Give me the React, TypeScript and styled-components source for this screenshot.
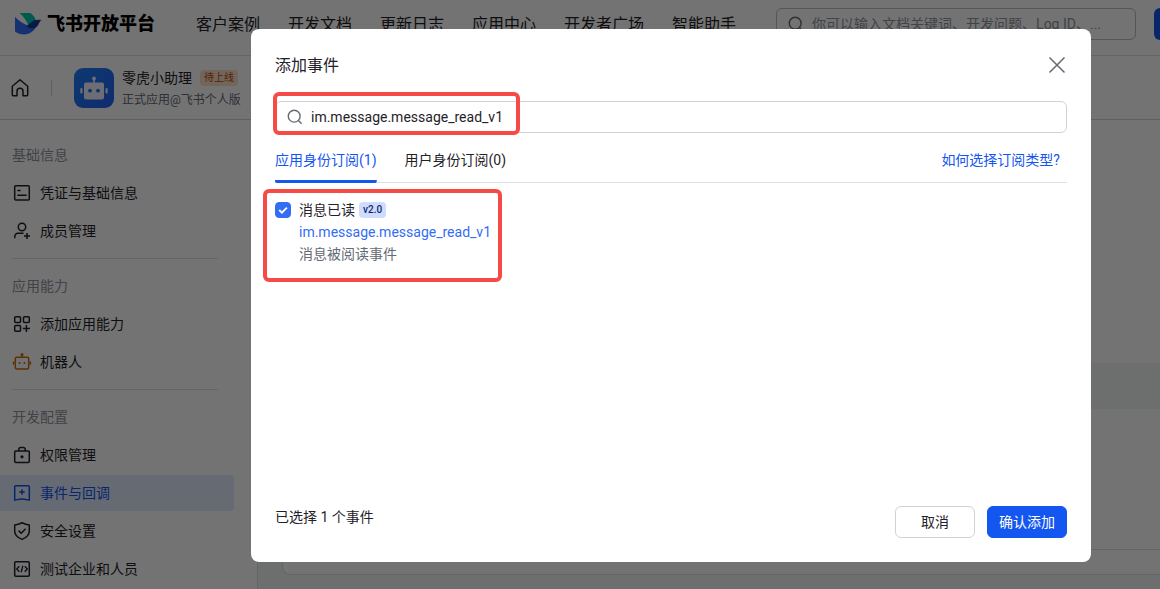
import React, { useState } from 'react';
import styled, { createGlobalStyle } from 'styled-components';

const Global = createGlobalStyle`
  * { box-sizing: border-box; }
  body {
    margin: 0;
    background: #fff;
    color: #1f2329;
    font-family: Roboto, 'Noto Sans CJK SC', sans-serif;
    font-size: 14px;
    line-height: 22px;
  }
  button, input { font: inherit; color: inherit; }
  button { cursor: pointer; }
  a { color: inherit; text-decoration: none; }
`;

/* ---------- page frame ---------- */

const Page = styled.div`
  display: flex;
  flex-direction: column;
  height: 100vh;
  overflow: hidden;
`;

const TopBar = styled.header`
  display: flex;
  flex: none;
  align-items: center;
  height: 56px;
  padding: 0 0 8px 14px;
  border-bottom: 1px solid #dee0e3;
`;

const Brand = styled.a`
  display: flex;
  flex: 0 0 182px;
  align-items: center;
  gap: 5px;
  color: #000;
  font-size: 18px;
  font-weight: 900;
  white-space: nowrap;
`;

const TopNav = styled.nav`
  display: flex;
  flex: none;
  gap: 28px;
  padding-top: 2px;
  font-size: 16px;
  white-space: nowrap;
`;

const SearchField = styled.label`
  display: flex;
  align-items: center;
  gap: 8px;
  height: 32px;
  padding: 0 11px;
  border: 1px solid #d0d3d6;
  border-radius: 6px;
  color: #646a73;
`;

const TopSearch = styled(SearchField)`
  flex: 0 0 360px;
  margin: 0 18px 0 40px;
  border-color: #bbbfc4;
`;

const BareInput = styled.input`
  flex: 1;
  min-width: 0;
  padding: 0;
  border: 0;
  outline: 0;
  background: transparent;
  color: #1f2329;
  &::placeholder { color: #8f959e; opacity: 1; }
`;

const LoginButton = styled.button`
  flex: none;
  width: 80px;
  height: 32px;
  border: 0;
  border-radius: 6px;
  background: #1456f0;
  color: #fff;
`;

const AppBar = styled.div`
  display: flex;
  flex: none;
  align-items: center;
  height: 64px;
  padding-left: 10px;
  border-bottom: 1px solid #d0d3d6;
`;

const HomeLink = styled.a`
  display: flex;
  margin-right: 21px;
`;

const Divider = styled.span`
  width: 1px;
  height: 16px;
  margin-right: 22px;
  background: #d0d3d6;
`;

const AppText = styled.div`
  margin-left: 8px;
  padding-top: 2px;
`;

const AppName = styled.div`
  display: flex;
  align-items: center;
  gap: 8px;
`;

const StatusTag = styled.span`
  padding: 0 4px;
  border-radius: 4px;
  background: #fedfc8;
  color: #b25206;
  font-size: 10px;
  line-height: 16px;
`;

const AppKind = styled.div`
  color: #646a73;
  font-size: 12px;
`;

const Body = styled.div`
  display: flex;
  flex: 1;
  min-height: 0;
`;

/* ---------- side navigation ---------- */

const Sidebar = styled.aside`
  flex: 0 0 258px;
  padding: 17px 23px 0 0;
  overflow: hidden;
  border-right: 1px solid #dee0e3;
`;

const NavGroup = styled.section`
  & + &::before {
    content: '';
    display: block;
    margin: 9px 16px 9px 12px;
    border-top: 1px solid #dee0e3;
  }
`;

const NavHeading = styled.h2`
  display: flex;
  align-items: center;
  height: 36px;
  margin: 0 0 2px;
  padding-left: 12px;
  color: #8f959e;
  font-size: 14px;
  font-weight: 400;
`;

const NavItem = styled.a<{ $active?: boolean }>`
  display: flex;
  align-items: center;
  gap: 8px;
  height: 36px;
  margin-bottom: 2px;
  padding-left: 12px;
  border-radius: 0 4px 4px 0;
  background: ${p => (p.$active ? '#e1eaff' : 'transparent')};
  color: ${p => (p.$active ? '#1456f0' : '#1f2329')};
`;

/* ---------- content behind the dialog ---------- */

const Content = styled.main`
  display: flex;
  flex: 1;
  padding: 0 0 14px 24px;
  background: #f0f5f4;
`;

const Card = styled.section`
  display: flex;
  flex: 1;
  flex-direction: column;
  border: solid #dee0e3;
  border-width: 0 0 1px 1px;
  border-radius: 0 0 0 8px;
  background: #fff;
`;

const CardSpace = styled.div`
  flex: 1;
`;

const TableHead = styled.div`
  height: 46px;
  background: #f0f5f4;
`;

const TableBody = styled.div`
  height: 141px;
  margin-bottom: 24px;
  border-bottom: 1px solid #dee0e3;
`;

/* ---------- dialog ---------- */

const Overlay = styled.div`
  position: fixed;
  inset: 0;
  display: flex;
  padding: 29px 69px 27px 251px;
  background: rgba(0, 0, 0, 0.55);
`;

const Dialog = styled.div`
  display: flex;
  flex: 1;
  flex-direction: column;
  padding: 24px;
  border-radius: 8px;
  background: #fff;
`;

const DialogHead = styled.div`
  display: flex;
  align-items: center;
  justify-content: space-between;
  height: 24px;
  margin-bottom: 24px;
`;

const DialogTitle = styled.h1`
  margin: 0;
  padding-top: 2px;
  font-size: 16px;
  font-weight: 400;
`;

const CloseButton = styled.button`
  display: flex;
  padding: 0;
  border: 0;
  background: none;
  color: #646a73;
`;

const Marked = styled.div`
  position: relative;
`;

const Mark = styled.span`
  position: absolute;
  border: 4px solid #f54a45;
  border-radius: 6px;
  pointer-events: none;
`;

const SearchMark = styled(Mark)`
  top: -9px;
  left: -2px;
  width: 247px;
  height: 43px;
`;

const EventMark = styled(Mark)`
  inset: -10px -11px -17px -12px;
`;

const TabRow = styled.div`
  display: flex;
  gap: 28px;
  height: 50px;
  padding-right: 7px;
  border-bottom: 1px solid #dee0e3;
`;

const Tab = styled.button<{ $active?: boolean }>`
  height: 50px;
  padding: 4px 0 0;
  border: 0;
  border-radius: 2px;
  background: ${p =>
    p.$active ? 'linear-gradient(#1456f0, #1456f0) bottom / 100% 3px no-repeat' : 'none'};
  color: ${p => (p.$active ? '#1456f0' : '#1f2329')};
`;

const HelpLink = styled.a`
  margin: 16px 0 0 auto;
  color: #1456f0;
`;

const EventItem = styled(Marked)`
  display: flex;
  gap: 8px;
  align-self: flex-start;
  margin-top: 16px;
`;

const CheckBox = styled.span`
  display: grid;
  height: 16px;
  margin-top: 3px;
  svg {
    grid-area: 1 / 1;
    pointer-events: none;
  }
`;

const CheckInput = styled.input`
  grid-area: 1 / 1;
  width: 16px;
  height: 16px;
  margin: 0;
  border: 1px solid #8f959e;
  border-radius: 4px;
  appearance: none;
  &:checked {
    border-color: #336df4;
    background: #336df4;
  }
`;

const EventTitle = styled.label`
  display: flex;
  align-items: center;
  gap: 4px;
`;

const VersionTag = styled.span`
  padding: 0 4px;
  border-radius: 4px;
  background: #d0dcff;
  color: #0c296e;
  font-size: 10px;
  font-weight: 500;
  line-height: 16px;
`;

const EventCode = styled.a`
  display: block;
  color: #336df4;
`;

const EventNote = styled.div`
  color: #646a73;
`;

const DialogFoot = styled.div`
  display: flex;
  align-items: center;
  gap: 12px;
  margin-top: auto;
`;

const Picked = styled.span`
  margin: 0 auto 10px 0;
`;

const Button = styled.button<{ $primary?: boolean }>`
  width: 80px;
  height: 32px;
  padding: 0;
  border: 1px solid ${p => (p.$primary ? '#1456f0' : '#d0d3d6')};
  border-radius: 6px;
  background: ${p => (p.$primary ? '#1456f0' : '#fff')};
  color: ${p => (p.$primary ? '#fff' : '#1f2329')};
`;

/* ---------- drawings ---------- */

const Glyph = styled.svg`
  flex: none;
  fill: none;
  stroke: currentColor;
  stroke-width: 1.5;
  stroke-linejoin: round;
`;

const Icon = ({ children }: { children: React.ReactNode }) => (
  <Glyph width="20" height="20" viewBox="0 0 20 20" aria-hidden="true">{children}</Glyph>
);

const SearchIcon = () => (
  <Glyph width="16" height="16" viewBox="0 0 16 16" aria-hidden="true">
    <circle cx="7.2" cy="7.2" r="5.9" strokeWidth="1.4" />
    <path d="M11.4 11.6 14.6 14.8" strokeWidth="1.4" />
  </Glyph>
);

const CredentialIcon = () => (
  <Icon><rect x="2.7" y="2.7" width="14.6" height="14.2" rx="1" /><path d="M5.3 7.4h3.4M5.3 12.2h9.4" /></Icon>
);

const MemberIcon = () => (
  <Icon>
    <circle cx="10" cy="6" r="3.7" />
    <path d="M2.8 17.2v-1.9a3 3 0 0 1 3-3h5.7M15 12v6M12 15h6" />
  </Icon>
);

const AbilityIcon = () => (
  <Icon>
    <rect x="2.7" y="2.7" width="5.8" height="5.8" rx="1" />
    <rect x="11.5" y="2.7" width="5.8" height="5.8" rx="1" />
    <rect x="2.7" y="11.5" width="5.8" height="5.8" rx="1" />
    <path d="M14.4 11v7M10.9 14.5h7" />
  </Icon>
);

const BotIcon = () => (
  <Glyph width="20" height="20" viewBox="0 0 20 20" color="#c7700a" aria-hidden="true">
    <rect x="3.3" y="5.2" width="13.4" height="11.8" rx="1.5" />
    <path d="M10 5V2M1.6 9.4v3.4M18.4 9.4v3.4" />
    <path d="M6.8 11h1.6M11.6 11h1.6" strokeWidth="1.8" />
    <circle cx="10" cy="2.6" r=".8" fill="currentColor" />
  </Glyph>
);

const PermissionIcon = () => (
  <Icon>
    <rect x="2.7" y="6" width="14.6" height="11.4" rx="1" />
    <path d="M6.8 6V4.6a2 2 0 0 1 2-2h2.4a2 2 0 0 1 2 2V6" />
    <circle cx="10" cy="11.8" r="1.6" fill="currentColor" stroke="none" />
  </Icon>
);

const EventIcon = () => (
  <Icon>
    <path d="M3.7 2.7h12.6a1 1 0 0 1 1 1v13.5c-2.2-.5-4.8-1.3-7.3-1.3s-5.1.8-7.3 1.3V3.7a1 1 0 0 1 1-1Z" />
    <path d="M10 6.2v5.6M7.2 9h5.6" />
  </Icon>
);

const ShieldIcon = () => (
  <Icon>
    <path d="M10 1.8c2.5 1.2 4.8 1.9 7.3 2.2v6.2c0 3.9-3.2 6.5-7.3 8.2-4.1-1.7-7.3-4.3-7.3-8.2V4C5.2 3.7 7.5 3 10 1.8Z" />
    <path d="m6.6 9.6 2.6 2.6 4.4-4.4" />
  </Icon>
);

const TestIcon = () => (
  <Icon>
    <rect x="2.7" y="2.7" width="14.6" height="14.6" rx="1" />
    <path d="M7.3 7.2 4.7 10l2.6 2.8M12.7 7.2l2.6 2.8-2.6 2.8M10.9 6.8l-1.8 6.4" strokeWidth="1.3" />
  </Icon>
);

const HomeIcon = () => (
  <Icon>
    <path d="M2.3 8.3 10 1.8l7.7 6.500v8.400a1 1 0 0 1-1 1H13v-4.400a3 3 0 0 0-6 0v4.400H3.300a1 1 0 0 1-1-1Z" />
  </Icon>
);

const BrandLogo = () => (
  <svg width="28" height="24" viewBox="0 0 28 24" aria-hidden="true">
    <path d="M5.5 1h11c2.800 2 4.800 4.800 5.500 7.400-3 .8-5.500 3.200-7.500 5.200C12.500 8.500 9.500 4.500 5.500 1Z" fill="#00c9ad" />
    <path d="M1 5c4 4 8.500 7 14 8.700 3 .9 5.500.8 8.500-1C20.500 18.500 16 22.500 10 22.500c-3.500 0-6.500-1-9-3Z" fill="#3370ff" />
    <path d="M12.500 14.500C16.500 10.500 19.500 6.500 27.500 8c-2.500 2-2.700 4.500-4.500 6.500-2.500 2.500-6.500 2.500-10.500 0Z" fill="#133c9a" />
  </svg>
);

const AppLogo = () => (
  <svg width="40" height="40" viewBox="0 0 40 40" aria-hidden="true">
    <defs>
      <linearGradient id="appTile" x1="0" y1="0" x2="1" y2="1">
        <stop offset="0" stopColor="#1f80f5" />
        <stop offset="1" stopColor="#2560f5" />
      </linearGradient>
    </defs>
    <rect width="40" height="40" rx="9" fill="url(#appTile)" />
    <g fill="#f0f4ff">
      <rect x="10" y="14.5" width="20" height="17" rx="2" />
      <rect x="19.2" y="10" width="1.6" height="5" />
      <circle cx="20" cy="10.5" r="1.9" />
      <rect x="6.3" y="20" width="2.2" height="5.5" rx="1" />
      <rect x="31.5" y="20" width="2.2" height="5.5" rx="1" />
    </g>
    <g fill="#2a70f8">
      <circle cx="16" cy="22.7" r="1.9" />
      <circle cx="24" cy="22.7" r="1.9" />
    </g>
  </svg>
);

/* ---------- data ---------- */

const topLinks = ['客户案例', '开发文档', '更新日志', '应用中心', '开发者广场', '智能助手'];

const groups = [
  {
    title: '基础信息',
    items: [
      { label: '凭证与基础信息', icon: <CredentialIcon /> },
      { label: '成员管理', icon: <MemberIcon /> },
    ],
  },
  {
    title: '应用能力',
    items: [
      { label: '添加应用能力', icon: <AbilityIcon /> },
      { label: '机器人', icon: <BotIcon /> },
    ],
  },
  {
    title: '开发配置',
    items: [
      { label: '权限管理', icon: <PermissionIcon /> },
      { label: '事件与回调', icon: <EventIcon />, active: true },
      { label: '安全设置', icon: <ShieldIcon /> },
      { label: '测试企业和人员', icon: <TestIcon /> },
    ],
  },
];

export default function App() {
  const [query, setQuery] = useState('im.message.message_read_v1');
  const [checked, setChecked] = useState(true);

  return (
    <>
      <Global />
      <Page>
        <TopBar>
          <Brand href="#"><BrandLogo />飞书开放平台</Brand>
          <TopNav>{topLinks.map(t => <a key={t} href="#">{t}</a>)}</TopNav>
          <TopSearch>
            <SearchIcon />
            <BareInput aria-label="搜索" placeholder="你可以输入文档关键词、开发问题、Log ID、..." />
          </TopSearch>
          <LoginButton aria-label="登录" />
        </TopBar>
        <AppBar>
          <HomeLink href="#" aria-label="首页"><HomeIcon /></HomeLink>
          <Divider />
          <AppLogo />
          <AppText>
            <AppName>零虎小助理<StatusTag>待上线</StatusTag></AppName>
            <AppKind>正式应用@飞书个人版</AppKind>
          </AppText>
        </AppBar>
        <Body>
          <Sidebar>
            {groups.map(g => (
              <NavGroup key={g.title}>
                <NavHeading>{g.title}</NavHeading>
                {g.items.map(i => (
                  <NavItem key={i.label} href="#" $active={'active' in i}>{i.icon}{i.label}</NavItem>
                ))}
              </NavGroup>
            ))}
          </Sidebar>
          <Content>
            <Card>
              <CardSpace />
              <TableHead />
              <TableBody />
            </Card>
          </Content>
        </Body>
      </Page>
      <Overlay>
        <Dialog role="dialog" aria-modal="true" aria-labelledby="dialog-title">
          <DialogHead>
            <DialogTitle id="dialog-title">添加事件</DialogTitle>
            <CloseButton aria-label="关闭">
              <Glyph width="20" height="20" viewBox="0 0 20 20"><path d="m2.5 2.5 15 15M17.5 2.5l-15 15" /></Glyph>
            </CloseButton>
          </DialogHead>
          <Marked>
            <SearchField>
              <SearchIcon />
              <BareInput aria-label="搜索事件" value={query} onChange={e => setQuery(e.target.value)} />
            </SearchField>
            <SearchMark />
          </Marked>
          <TabRow>
            <Tab $active>应用身份订阅(1)</Tab>
            <Tab>用户身份订阅(0)</Tab>
            <HelpLink href="#">如何选择订阅类型?</HelpLink>
          </TabRow>
          <EventItem>
            <CheckBox>
              <CheckInput id="event-read" type="checkbox" checked={checked} onChange={e => setChecked(e.target.checked)} />
              {checked && (
                <svg width="16" height="16" viewBox="0 0 16 16" aria-hidden="true">
                  <path d="m4.2 8 2.7 2.7 5-5" fill="none" stroke="#fff" strokeWidth="1.8" />
                </svg>
              )}
            </CheckBox>
            <div>
              <EventTitle htmlFor="event-read">消息已读<VersionTag>v2.0</VersionTag></EventTitle>
              <EventCode href="#">im.message.message_read_v1</EventCode>
              <EventNote>消息被阅读事件</EventNote>
            </div>
            <EventMark />
          </EventItem>
          <DialogFoot>
            <Picked>已选择 1 个事件</Picked>
            <Button>取消</Button>
            <Button $primary>确认添加</Button>
          </DialogFoot>
        </Dialog>
      </Overlay>
    </>
  );
}
